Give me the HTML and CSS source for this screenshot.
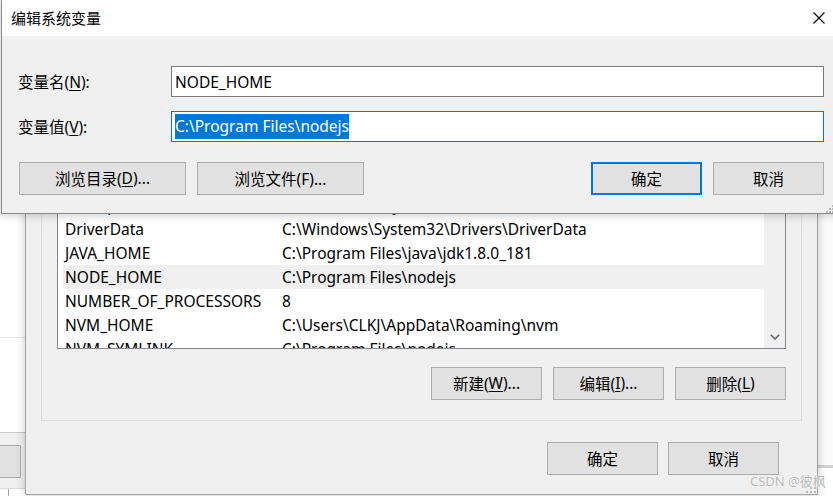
FILE: index.html
```html
<!DOCTYPE html>
<html lang="zh-CN">
<head>
<meta charset="utf-8">
<title>编辑系统变量</title>
<link rel="stylesheet" href="styles.css">
</head>
<body>
<div class="desktop">
  <div class="sidewin">
    <div class="side-pane1"></div>
    <div class="side-pane2"></div>
    <div class="side-gray"><div class="side-btn"></div></div>
    <div class="side-bottom"><div class="side-tick"></div></div>
  </div>

  <div class="rightwin">
    <div class="right-pane"></div>
    <div class="right-bar"></div>
  </div>

  <div class="envwin">
    <div class="groupbox">
      <div class="list">
        <div class="rows">
          <div class="row"><span class="c1">ComSpec</span><span class="c2">C:\WINDOWS\system32\cmd.exe</span></div>
          <div class="row"><span class="c1">DriverData</span><span class="c2">C:\Windows\System32\Drivers\DriverData</span></div>
          <div class="row"><span class="c1">JAVA_HOME</span><span class="c2">C:\Program Files\java\jdk1.8.0_181</span></div>
          <div class="row sel"><span class="c1">NODE_HOME</span><span class="c2">C:\Program Files\nodejs</span></div>
          <div class="row"><span class="c1">NUMBER_OF_PROCESSORS</span><span class="c2">8</span></div>
          <div class="row"><span class="c1">NVM_HOME</span><span class="c2">C:\Users\CLKJ\AppData\Roaming\nvm</span></div>
          <div class="row"><span class="c1">NVM_SYMLINK</span><span class="c2">C:\Program Files\nodejs</span></div>
        </div>
        <div class="vscroll">
          <div class="arrow">
            <svg width="10" height="6" viewBox="0 0 10 6"><polyline points="0.8,0.8 5,5 9.2,0.8" fill="none" stroke="#606060" stroke-width="1.5"/></svg>
          </div>
        </div>
      </div>
      <div class="btnrow group-row">
        <div class="btn">新建(<u>W</u>)...</div>
        <div class="btn">编辑(<u>I</u>)...</div>
        <div class="btn">删除(<u>L</u>)</div>
      </div>
    </div>
    <div class="btnrow bottom-row">
      <div class="btn">确定</div>
      <div class="btn">取消</div>
    </div>
    <svg class="grip env-grip" width="10" height="10" viewBox="0 0 10 10">
      <rect x="8" y="0" width="2" height="2"/><rect x="4" y="4" width="2" height="2"/><rect x="8" y="4" width="2" height="2"/>
      <rect x="0" y="8" width="2" height="2"/><rect x="4" y="8" width="2" height="2"/><rect x="8" y="8" width="2" height="2"/>
    </svg>
  </div>

  <div class="dialog">
    <div class="titlebar">
      <span class="title">编辑系统变量</span>
      <div class="close">
        <svg width="12" height="12" viewBox="0 0 12 12"><path d="M0.5 0.5 L11.5 11.5 M11.5 0.5 L0.5 11.5" stroke="#000" stroke-width="1.1" fill="none"/></svg>
      </div>
    </div>
    <div class="dbody">
      <div class="field">
        <span class="label">变量名(<u>N</u>):</span>
        <div class="input"><span class="val">NODE_HOME</span></div>
      </div>
      <div class="field">
        <span class="label">变量值(<u>V</u>):</span>
        <div class="input focus"><span class="val selected">C:\Program Files\nodejs</span></div>
      </div>
      <div class="dbtns">
        <div class="btn wide">浏览目录(<u>D</u>)...</div>
        <div class="btn wide">浏览文件(F)...</div>
        <div class="spacer"></div>
        <div class="btn ok">确定</div>
        <div class="btn">取消</div>
      </div>
    </div>
    <svg class="grip dlg-grip" width="8" height="8" viewBox="0 0 8 8">
      <rect x="6" y="0" width="2" height="2"/><rect x="3" y="3" width="2" height="2"/><rect x="6" y="3" width="2" height="2"/>
      <rect x="0" y="6" width="2" height="2"/><rect x="3" y="6" width="2" height="2"/><rect x="6" y="6" width="2" height="2"/>
    </svg>
  </div>

  <div class="watermark">CSDN @彼枫</div>
</div>
</body>
</html>
```

FILE: styles.css
```css
* { box-sizing: border-box; }
html, body { margin: 0; padding: 0; }
body {
  width: 833px;
  height: 496px;
  overflow: hidden;
  background: #fff;
  font-family: "Noto Sans", "Noto Sans CJK SC", sans-serif;
  font-size: 15.5px;
  color: #000;
}
u { text-decoration: underline; text-underline-offset: 2px; }

.desktop {
  position: relative;
  width: 833px;
  height: 496px;
  overflow: hidden;
  background: #fff;
}

/* window peeking at the left */
.sidewin {
  position: absolute;
  left: 0;
  top: 150px;
  width: 40px;
  height: 346px;
  display: flex;
  flex-direction: column;
}
.side-pane1 { height: 188px; background: #fff; border-bottom: 1px solid #e5e5e5; flex: none; }
.side-pane2 { height: 95px; background: #fff; border-bottom: 1px solid #c8c8c8; flex: none; }
.side-gray { height: 55px; background: #f0f0f0; padding-top: 12px; flex: none; }
.side-btn { width: 21px; height: 33px; background: #e1e1e1; border: 1px solid #adadad; border-left: none; }
.side-bottom { flex: 1; background: #fff; border-top: 1px solid #dadada; padding-left: 8px; }
.side-tick { width: 1px; height: 100%; background: #a0a0a0; }

/* window peeking at the right */
.rightwin {
  position: absolute;
  left: 812px;
  top: 150px;
  width: 30px;
  height: 346px;
  background: #fff;
  display: flex;
  flex-direction: column;
}
.right-pane { height: 315px; background: #fbfbfb; flex: none; }
.right-bar { height: 3px; background: #d2d2d2; flex: none; }

/* environment variables window (behind) */
.envwin {
  position: absolute;
  left: 25px;
  top: 150px;
  width: 793px;
  height: 345px;
  background: #f0f0f0;
  border: 1px solid #a3a3a3;
  box-shadow: 0 0 9px rgba(0, 0, 0, 0.22);
  padding: 0 15px;
  display: flex;
  flex-direction: column;
}
.groupbox {
  margin-top: 19px;
  border: 1px solid #dcdcdc;
  padding: 21px 15px 20px;
}
.list {
  height: 157px;
  border: 1px solid #828790;
  background: #fff;
  display: flex;
  overflow: hidden;
}
.rows {
  flex: 1;
  padding-left: 5px;
  overflow: hidden;
}
.row {
  height: 24px;
  display: flex;
  align-items: center;
  padding-left: 2px;
  white-space: nowrap;
  padding-bottom: 1px;
}
.row.sel { background: #f0f0f0; }
.c1 { width: 217px; flex: none; }
.vscroll {
  width: 21px;
  flex: none;
  background: #f0f0f0;
  display: flex;
  flex-direction: column;
  justify-content: flex-end;
}
.arrow {
  height: 22px;
  display: flex;
  align-items: center;
  justify-content: center;
}
.arrow svg { display: block; }

.btnrow {
  display: flex;
  justify-content: flex-end;
  gap: 10px;
  margin-top: 18px;
}
.group-row { gap: 11px; }
.bottom-row {
  margin-top: 21px;
  padding-right: 23px;
}
.btn {
  width: 111px;
  height: 33px;
  flex: none;
  background: #e1e1e1;
  border: 1px solid #adadad;
  display: flex;
  align-items: center;
  justify-content: center;
  white-space: nowrap;
  padding-bottom: 1px;
}

.grip { position: absolute; fill: #b4b4b4; }
.env-grip { right: 1px; bottom: 1px; }

/* edit dialog (front) */
.dialog {
  position: absolute;
  left: 1px;
  top: -1px;
  width: 843px;
  height: 215px;
  background: #f0f0f0;
  border: 1px solid #8a8a8a;
  box-shadow: 0 1px 9px rgba(0, 0, 0, 0.22);
  display: flex;
  flex-direction: column;
}
.titlebar {
  height: 36px;
  flex: none;
  background: #fff;
  display: flex;
  align-items: center;
  padding-left: 9px;
}
.title { font-size: 15px; padding-bottom: 1px; }
.close {
  margin-left: auto;
  width: 48px;
  height: 36px;
  display: flex;
  align-items: center;
  justify-content: center;
}
.close svg { display: block; }
.dbody {
  flex: 1;
  padding: 30px 19px 0 16px;
}
.field {
  display: flex;
  align-items: center;
  height: 31px;
}
.field + .field { margin-top: 14px; }
.label { width: 153px; flex: none; }
.input {
  flex: 1;
  height: 31px;
  background: #fff;
  border: 1px solid #7a7a7a;
  padding-left: 3px;
  display: flex;
  align-items: center;
}
.input.focus { border-color: #0078d7; }
.val { white-space: nowrap; }
.selected {
  background: #0078d7;
  color: #fff;
  height: 25px;
  display: flex;
  align-items: center;
  padding-bottom: 1px;
}
.dbtns {
  display: flex;
  gap: 11px;
  margin-top: 20px;
  padding-left: 1px;
}
.btn.wide { width: 167px; }
.spacer { flex: 1; }
.btn.ok { border: 2px solid #0078d7; }
.dlg-grip { left: 824px; top: 205px; }

.watermark {
  position: absolute;
  left: 750px;
  top: 471px;
  font-size: 13px;
  color: #b8b8b8;
  text-shadow: 0 0 1px #fff, 0 0 1px #fff;
  white-space: nowrap;
}
```
